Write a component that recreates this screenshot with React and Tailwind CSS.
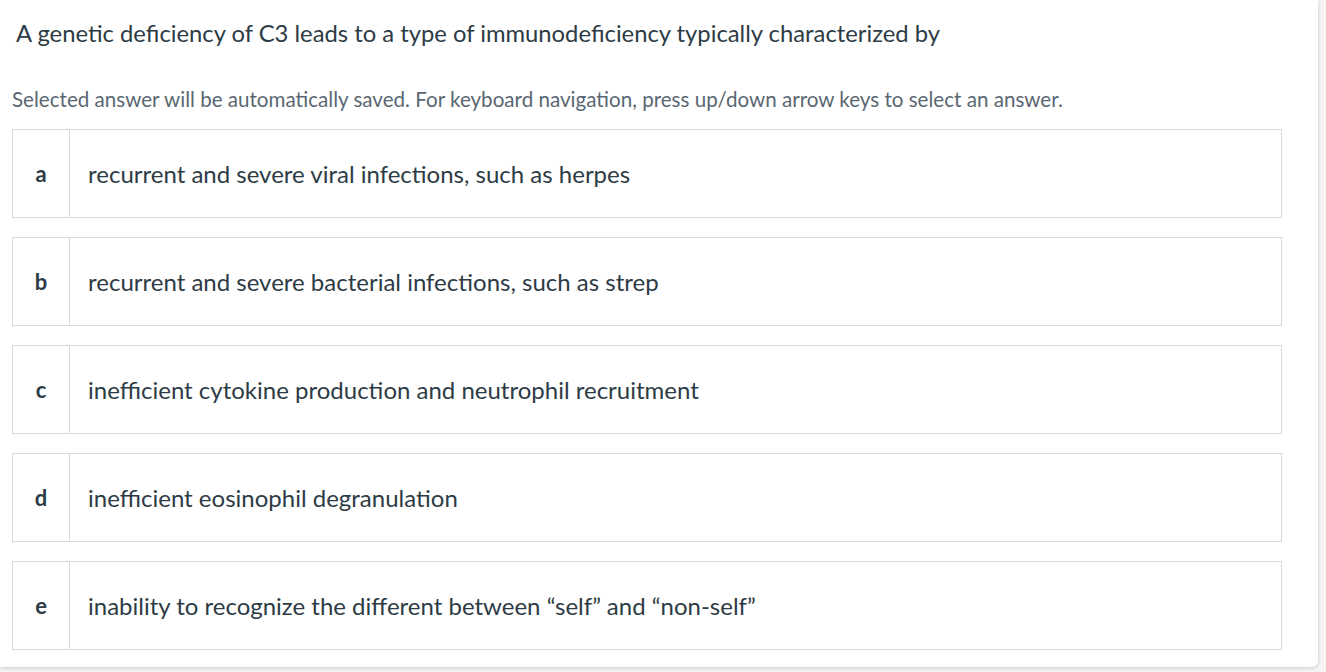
import React from "react";

const options = [
  ["a", "recurrent and severe viral infections, such as herpes"],
  ["b", "recurrent and severe bacterial infections, such as strep"],
  ["c", "inefficient cytokine production and neutrophil recruitment"],
  ["d", "inefficient eosinophil degranulation"],
  ["e", "inability to recognize the different between \u201cself\u201d and \u201cnon-self\u201d"],
];

export default function App() {
  return (
    <div className="w-[1326px] h-[672px] bg-[#f5f5f5] overflow-hidden" style={{ fontFamily: "Lato, 'Open Sans', sans-serif" }}>
      <div className="w-[1318px] h-[667px] bg-white rounded-br-[6px] shadow-[0_1px_4px_rgba(0,0,0,0.18)] flex flex-col">
        <h1 className="pl-[16px] pt-[16px] text-[23.8px] leading-[34px] text-[#2d3b45] font-normal">
          A genetic deficiency of C3 leads to a type of immunodeficiency typically characterized by
        </h1>
        <p className="pl-[12px] mt-[36px] text-[20.6px] leading-[26px] text-[#5a6772]">
          Selected answer will be automatically saved. For keyboard navigation, press up/down arrow keys to select an answer.
        </p>
        <div className="flex flex-col gap-[19px] mt-[17px] pl-[12px]">
          {options.map(([letter, text]) => (
            <div key={letter} className="w-[1270px] h-[89px] border border-[#d7dadd] flex">
              <div className="w-[57px] border-r border-[#d7dadd] flex items-center justify-center text-[22px] font-bold text-[#2d3b45]">
                {letter}
              </div>
              <div className="flex-1 flex items-center pl-[18px] text-[24px] text-[#2d3b45]">
                {text}
              </div>
            </div>
          ))}
        </div>
      </div>
    </div>
  );
}
